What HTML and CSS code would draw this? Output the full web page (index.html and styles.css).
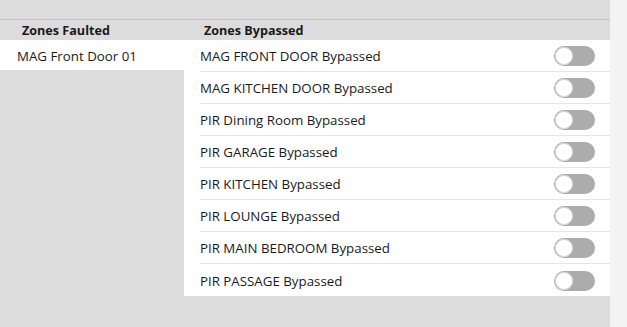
FILE: index.html
```html
<!DOCTYPE html>
<html>
<head>
<meta charset="utf-8">
<link rel="stylesheet" href="styles.css">
</head>
<body>
<div class="page">
  <div class="main">
    <div class="topbar"></div>
    <div class="header">
      <div class="hcol left">Zones Faulted</div>
      <div class="hcol right">Zones Bypassed</div>
    </div>
    <div class="content">
      <div class="faulted">
        <div class="fcell">MAG Front Door 01</div>
      </div>
      <div class="bypassed">
        <div class="row"><span>MAG FRONT DOOR Bypassed</span><span class="toggle"></span></div>
        <div class="row"><span>MAG KITCHEN DOOR Bypassed</span><span class="toggle"></span></div>
        <div class="row"><span>PIR Dining Room Bypassed</span><span class="toggle"></span></div>
        <div class="row"><span>PIR GARAGE Bypassed</span><span class="toggle"></span></div>
        <div class="row"><span>PIR KITCHEN Bypassed</span><span class="toggle"></span></div>
        <div class="row"><span>PIR LOUNGE Bypassed</span><span class="toggle"></span></div>
        <div class="row"><span>PIR MAIN BEDROOM Bypassed</span><span class="toggle"></span></div>
        <div class="row"><span>PIR PASSAGE Bypassed</span><span class="toggle"></span></div>
      </div>
    </div>
  </div>
  <div class="scroll"></div>
</div>
</body>
</html>
```
FILE: styles.css
```css
html, body {
  margin: 0;
  padding: 0;
}
body {
  font-family: "Open Sans", "Noto Sans", sans-serif;
  font-size: 13.3px;
  color: #1a1a1a;
}
.page {
  display: flex;
  width: 627px;
  height: 327px;
  overflow: hidden;
}
.main {
  width: 610px;
  background: #dcdcdc;
  display: flex;
  flex-direction: column;
}
.scroll {
  width: 17px;
  background: #f3f3f3;
}
.topbar {
  height: 20px;
  border-bottom: 1px solid #c4c4c4;
  box-sizing: border-box;
}
.header {
  display: flex;
  height: 20px;
  align-items: center;
  font-weight: 700;
  font-size: 12.6px;
  padding-top: 1px;
  box-sizing: border-box;
}
.hcol.left {
  width: 184px;
  padding-left: 22px;
  box-sizing: border-box;
}
.hcol.right {
  padding-left: 20px;
}
.content {
  display: flex;
  align-items: flex-start;
}
.faulted {
  width: 184px;
}
.fcell {
  height: 30px;
  background: #fff;
  padding-left: 17px;
  display: flex;
  align-items: center;
  padding-top: 1px;
  box-sizing: border-box;
}
.bypassed {
  width: 426px;
  background: #fff;
  padding-left: 16px;
  box-sizing: border-box;
}
.row {
  height: 32px;
  display: flex;
  align-items: center;
  justify-content: space-between;
  padding-right: 15px;
  padding-top: 1px;
  border-bottom: 1px solid #e4e4e4;
  box-sizing: border-box;
}
.row:last-child {
  border-bottom: none;
}
.toggle {
  width: 41px;
  height: 20px;
  border-radius: 10px;
  background: #acacac;
  position: relative;
  box-sizing: border-box;
}
.toggle::after {
  content: "";
  position: absolute;
  left: 1px;
  top: 1px;
  width: 18px;
  height: 18px;
  border-radius: 50%;
  background: #fff;
  box-shadow: inset 0 0 0 1px #d0d0d0;
}
```
